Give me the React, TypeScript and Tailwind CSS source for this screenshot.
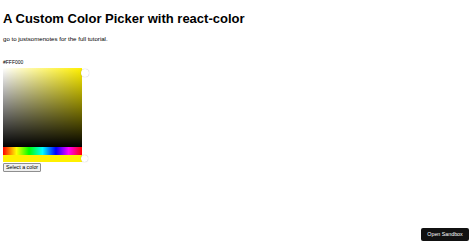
import React from "react";

export default function App() {
  return (
    <div className="relative flex h-[248px] w-[474px] flex-col items-start overflow-hidden bg-white px-[3px] pt-[11px] text-black [font-family:'Liberation_Sans',Arial,sans-serif]">
      <h1 className="text-[13px] font-bold leading-[15px]">A Custom Color Picker with react-color</h1>
      <p className="mt-[9px] text-[6.1px] leading-[7px]">go to justsomenotes for the full tutorial.</p>
      <div className="mt-[17px] text-[5px] leading-[6px]">#FFF000</div>
      <div className="mt-[3px] flex w-[79px] flex-col">
        <div className="relative h-[79px] w-[79px] bg-[#fff000]">
          <div className="absolute inset-0 bg-gradient-to-r from-white to-transparent" />
          <div className="absolute inset-0 bg-gradient-to-t from-black to-transparent" />
          <div className="absolute -right-[7px] top-[1px] h-[8px] w-[8px] rounded-full bg-white shadow-[0_0_1px_rgba(0,0,0,0.35)]" />
        </div>
        <div className="h-[8px] bg-[linear-gradient(to_right,#f00_0%,#ff0_17%,#0f0_33%,#0ff_50%,#00f_67%,#f0f_83%,#f00_100%)]" />
        <div className="relative h-[7px] bg-[#fff000]">
          <div className="absolute -right-[6px] top-0 h-[7px] w-[7px] rounded-full bg-white shadow-[0_0_1px_rgba(0,0,0,0.35)]" />
        </div>
      </div>
      <button className="mt-[1px] h-[9px] rounded-[1px] border border-[#8f8f8f] bg-[#efefef] px-[2px] text-[5.3px] leading-[7px]">
        Select a color
      </button>
      <div className="absolute bottom-[7px] right-[5px] flex h-[13px] w-[48px] items-center justify-center rounded-[2px] bg-[#111] text-[5.3px] text-white">
        Open Sandbox
      </div>
    </div>
  );
}
